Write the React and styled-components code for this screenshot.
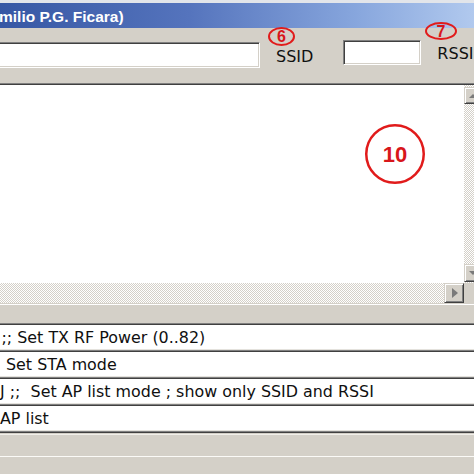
import React from "react";
import styled, { createGlobalStyle } from "styled-components";

const GlobalStyle = createGlobalStyle`
  html, body {
    margin: 0;
    padding: 0;
    background: #d4d0c8;
  }
  body {
    width: 474px;
    height: 474px;
    overflow: hidden;
  }
`;

const RED = "#e11b1b";
const checker = `repeating-conic-gradient(#ffffff 0 25%, #d4d0c8 0 50%) 0 0 / 2px 2px`;

const Window = styled.div`
  position: relative;
  width: 474px;
  height: 474px;
  overflow: hidden;
  background: #d4d0c8;
  font-family: "DejaVu Sans", Verdana, sans-serif;
  color: #101010;
`;

const TopEdge = styled.div`
  height: 3px;
  background: #e2e5ea;
`;

const TitleBar = styled.div`
  box-sizing: border-box;
  height: 25px;
  padding-top: 3px;
  background: linear-gradient(to right, #3657a4 0%, #5574bd 40%, #87a6dd 75%, #b1c9ee 100%);
  color: #fff;
  font: bold 15.5px/22px "Liberation Sans", Arial, sans-serif;
  text-indent: -1px;
  white-space: nowrap;
`;

const Toolbar = styled.div`
  display: flex;
  align-items: flex-start;
  height: 55px;
`;

const TextBox = styled.div`
  box-sizing: border-box;
  flex: 0 0 auto;
  width: ${(p) => p.$w}px;
  height: ${(p) => p.$h}px;
  margin-top: ${(p) => p.$top}px;
  margin-left: ${(p) => p.$ml || 0}px;
  background: #fff;
  border-top: 1px solid #808080;
  border-left: 1px solid #808080;
  border-bottom: 1px solid #fff;
  border-right: 1px solid #fff;
  box-shadow: inset 1px 1px 0 #404040, inset -1px -1px 0 #d4d0c8;
`;

const Label = styled.span`
  flex: 0 0 auto;
  font-size: 16px;
  line-height: 16px;
  margin-top: ${(p) => p.$top}px;
  margin-left: ${(p) => p.$ml}px;
  white-space: nowrap;
`;

const Memo = styled.div`
  margin-left: -3px;
  width: 484px;
  border-top: 1px solid #808080;
  border-bottom: 1px solid #fff;
`;

const MemoInner = styled.div`
  border-top: 1px solid #404040;
  border-bottom: 1px solid #d4d0c8;
`;

const MemoBody = styled.div`
  display: flex;
  height: 198px;
`;

const MemoContent = styled.div`
  flex: 1;
  background: #fff;
`;

const VScroll = styled.div`
  box-sizing: border-box;
  flex: 0 0 17px;
  display: flex;
  flex-direction: column;
  justify-content: space-between;
  padding: 2px 0 1px;
  background: ${checker};
`;

const HScroll = styled.div`
  display: flex;
  height: 20px;
  background: #d4d0c8;
`;

const Track = styled.div`
  flex: 1;
  background: ${checker};
`;

const Corner = styled.div`
  flex: 0 0 17px;
  background: #d4d0c8;
`;

const ScrollButton = styled.div`
  box-sizing: border-box;
  flex: 0 0 auto;
  width: ${(p) => p.$w}px;
  height: ${(p) => p.$h}px;
  display: flex;
  align-items: center;
  justify-content: center;
  background: #d4d0c8;
  border-top: 1px solid #d4d0c8;
  border-left: 1px solid #d4d0c8;
  border-right: 1px solid #404040;
  border-bottom: 1px solid #404040;
  box-shadow: inset 1px 1px 0 #fff, inset -1px -1px 0 #808080;
`;

const Arrow = styled.span`
  width: 0;
  height: 0;
  ${(p) =>
    p.$dir === "right"
      ? `border-top: 5px solid transparent; border-bottom: 5px solid transparent; border-left: 6px solid #7a7a7a; margin-left: 2px;`
      : p.$dir === "up"
      ? `border-left: 4px solid transparent; border-right: 4px solid transparent; border-bottom: 4px solid #7a7a7a;`
      : `border-left: 4px solid transparent; border-right: 4px solid transparent; border-top: 4px solid #7a7a7a;`}
`;

const CommandList = styled.div`
  margin-top: 18px;
`;

const CmdRow = styled.div`
  box-sizing: border-box;
  height: 27px;
  margin-left: -3px;
  width: 480px;
  padding-top: 2px;
  padding-left: ${(p) => 3 + p.$x}px;
  background: #fff;
  border-top: 1px solid #808080;
  border-bottom: 1px solid #e4e2dd;
  box-shadow: inset 0 1px 0 #404040;
  font-size: 15.9px;
  line-height: 24px;
  white-space: pre;
  overflow: hidden;
`;

const ListEnd = styled.div`
  margin-left: -3px;
  width: 480px;
  border-top: 1px solid #808080;
  box-shadow: inset 0 1px 0 #404040;
  height: 2px;
  border-bottom: 1px solid #f1efea;
`;

const StatusBar = styled.div`
  margin-top: 21px;
  border-top: 1px solid #fbfaf7;
  height: 17px;
`;

const Marker = styled.svg`
  position: absolute;
  left: ${(p) => p.$x}px;
  top: ${(p) => p.$y}px;
  overflow: visible;
  font-family: "Liberation Sans", Arial, sans-serif;
  font-weight: bold;
`;

function Annotation({ x, y, w, h, label, size, stroke }) {
  return (
    <Marker $x={x} $y={y} width={w} height={h} viewBox={`0 0 ${w} ${h}`}>
      <ellipse
        cx={w / 2}
        cy={h / 2}
        rx={w / 2 - stroke / 2}
        ry={h / 2 - stroke / 2}
        fill="none"
        stroke={RED}
        strokeWidth={stroke}
      />
      <text
        x={w / 2}
        y={h / 2 + size * 0.36}
        textAnchor="middle"
        fontSize={size}
        fill="#d8161b"
      >
        {label}
      </text>
    </Marker>
  );
}

const commands = [
  { x: 1.5, text: ";; Set TX RF Power (0..82)" },
  { x: 6, text: "Set STA mode" },
  { x: 0, text: "J ;;  Set AP list mode ; show only SSID and RSSI" },
  { x: 0, text: "AP list" },
];

export default function App() {
  return (
    <Window>
      <GlobalStyle />
      <TopEdge />
      <TitleBar>milio P.G. Ficara)</TitleBar>

      <Toolbar>
        <TextBox $w={263} $h={26} $top={14} $ml={-3} />
        <Label $top={21} $ml={16}>SSID</Label>
        <TextBox $w={78} $h={25} $top={12} $ml={30} />
        <Label $top={18} $ml={16}>RSSI</Label>
      </Toolbar>

      <Memo>
        <MemoInner>
          <MemoBody>
            <MemoContent />
            <VScroll>
              <ScrollButton $w={17} $h={17}>
                <Arrow $dir="up" />
              </ScrollButton>
              <ScrollButton $w={17} $h={18}>
                <Arrow $dir="down" />
              </ScrollButton>
            </VScroll>
          </MemoBody>
          <HScroll>
            <Track />
            <ScrollButton $w={20} $h={20}>
              <Arrow $dir="right" />
            </ScrollButton>
            <Corner />
          </HScroll>
        </MemoInner>
      </Memo>

      <CommandList>
        {commands.map((c, i) => (
          <CmdRow key={i} $x={c.x}>
            {c.text}
          </CmdRow>
        ))}
        <ListEnd />
      </CommandList>
      <StatusBar />

      <Annotation x={268} y={27} w={27} h={19} label="6" size={16} stroke={2} />
      <Annotation x={425} y={22} w={32} h={18} label="7" size={16} stroke={2} />
      <Annotation x={365} y={124} w={60} h={60} label="10" size={22} stroke={2.5} />
    </Window>
  );
}
